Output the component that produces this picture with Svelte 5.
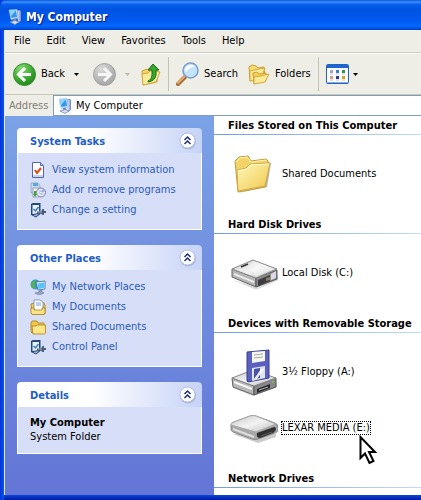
<script>
  const menus = ['File', 'Edit', 'View', 'Favorites', 'Tools', 'Help'];

  const panels = [
    {
      title: 'System Tasks',
      links: [
        { icon: 'info', label: 'View system information' },
        { icon: 'programs', label: 'Add or remove programs' },
        { icon: 'setting', label: 'Change a setting' }
      ]
    },
    {
      title: 'Other Places',
      links: [
        { icon: 'network', label: 'My Network Places' },
        { icon: 'documents', label: 'My Documents' },
        { icon: 'shared', label: 'Shared Documents' },
        { icon: 'setting', label: 'Control Panel' }
      ]
    },
    { title: 'Details', details: { name: 'My Computer', type: 'System Folder' } }
  ];

  const groups = [
    { title: 'Files Stored on This Computer', items: [{ icon: 'folder', label: 'Shared Documents' }] },
    { title: 'Hard Disk Drives', items: [{ icon: 'disk', label: 'Local Disk (C:)' }] },
    {
      title: 'Devices with Removable Storage',
      items: [
        { icon: 'floppy', label: '3½ Floppy (A:)' },
        { icon: 'removable', label: 'LEXAR MEDIA (E:)' }
      ]
    },
    { title: 'Network Drives', items: [] }
  ];

  let address = $state('My Computer');
  let selected = $state('LEXAR MEDIA (E:)');
  let closed = $state({});
</script>

{#snippet computer()}
  <svg class="computer" width="14" height="16" viewBox="0 0 14 16" aria-hidden="true">
    <path d="M9 1h3l1 1v10l-3 2z" fill="#7f93c9" />
    <path d="M10 2h1.500v10H10z" fill="#c3d0f0" />
    <path d="M1 1l8-.5 1 8.500-7 1.500z" fill="#d3ebfd" stroke="#8fb9e6" stroke-width=".6" />
    <path d="M2 2l6-.5 1 6.500-5.500 1z" fill="#2f97ee" />
    <path d="M2 2l6-.5-5 5.500z" fill="#8ad4fd" />
    <path d="M5 10l3-.5.500 2.500H5z" fill="#6c84c4" />
    <path d="M2 13l5-1.500 4 1.500-4 2.500z" fill="#dbe3f5" stroke="#7187bb" stroke-width=".8" />
  </svg>
{/snippet}

{#snippet taskIcon(name)}
  <svg width="16" height="16" viewBox="0 0 16 16" aria-hidden="true">
    {#if name === 'info'}
      <path d="M2.500.5h8l3 3v12h-11z" fill="#fdfdff" stroke="#5367ad" />
      <path d="M10.500.5v3h3" fill="#b8c6ec" stroke="#5367ad" />
      <path d="M3 13h10v2H3z" fill="#cbd3ec" />
      <path d="M5 8l2 3 4-5" fill="none" stroke="#d9521c" stroke-width="2.200" />
    {:else if name === 'programs'}
      <path d="M1 1h7l2 3v7H1z" fill="#c9d9ea" stroke="#91a3ba" stroke-width=".8" />
      <path d="M3 1h5v3H3z" fill="#5aa7da" />
      <path d="M3 6h6v9H3z" fill="#f5f6f8" stroke="#8591a5" stroke-width=".8" />
      <circle cx="11" cy="10.500" r="4.500" fill="#dde2f4" stroke="#7e87b7" />
      <path d="M11 10.500l2-4a4 4 0 0 1 2 3z" fill="#9babe5" />
      <circle cx="11" cy="10.500" r="1.300" fill="#fff" stroke="#868dad" stroke-width=".6" />
      <path d="M4 9h2v3h1l-2 3-2-3h1z" fill="#39a43a" />
    {:else if name === 'setting'}
      <path d="M1 2l2-1h7.500v11L6 15.500 1 13z" fill="#24487c" />
      <path d="M2.500 3h6.500v8l-6.500 1z" fill="#e6f3ff" />
      <path d="M3.500 7l2 2 3-4" fill="none" stroke="#3a77c2" stroke-width="1.400" />
      <path d="M3 13l3 1.500 3-2.500z" fill="#a5b4cf" />
      <path d="M7 9.500h4l1.500-2.500h1.500v2h2v2h-2v2h-1.500L11 11.500H7z" fill="#4c5d79" />
      <path d="M8 10h4" stroke="#b9c6d9" stroke-width=".8" />
    {:else if name === 'network'}
      <circle cx="5.500" cy="5.500" r="5" fill="#3e91e6" />
      <path d="M1 4l4-3 2 1-3 4 2 2-1 2-4-2z" fill="#52b44d" />
      <path d="M6 3l9-1v8l-7 1z" fill="#eaf7ff" stroke="#3262a4" stroke-width=".8" />
      <path d="M7.500 4.500L14 3.500V9l-5.500 1z" fill="#55c4f8" />
      <path d="M9 12l3-1v2l2 1-5 2-4-2 4-1z" fill="#9aa6c5" stroke="#6175a2" stroke-width=".6" />
    {:else if name === 'documents'}
      <path d="M1 5l3-1h10l1 2v9H2z" fill="#f3cc52" stroke="#a97d18" stroke-width=".8" />
      <path d="M4 1h6l3 2v9H4z" fill="#fff" stroke="#6a88b8" stroke-width=".8" />
      <path d="M6 4h5M6 6h5" stroke="#76a0d3" />
      <path d="M1 9h3v2h8V9h3v5l-1 1.500H2L1 14z" fill="#fbe386" stroke="#a97d18" stroke-width=".8" />
    {:else}
      <path d="M1 4l1-2h5l1 2h6v10H2l-1-1z" fill="#f1c84a" stroke="#a97d18" stroke-width=".8" />
      <path d="M2 7h4l1-1h8.500v8l-1 1H3z" fill="#fde68b" stroke="#a97d18" stroke-width=".8" />
    {/if}
  </svg>
{/snippet}

{#snippet driveIcon(name)}
  <svg width="48" height="48" viewBox="0 0 48 48" aria-hidden="true">
    <defs>
      <linearGradient id="gold" x1="0" y1="0" x2="1" y2="1">
        <stop offset="0" stop-color="#fff8b8" />
        <stop offset="1" stop-color="#efc84e" />
      </linearGradient>
      <linearGradient id="metal" x1="0" y1="0" x2="1" y2="1">
        <stop offset="0" stop-color="#c8c8c8" />
        <stop offset=".5" stop-color="#f3f3f3" />
        <stop offset="1" stop-color="#bcbcbc" />
      </linearGradient>
    </defs>
    {#if name === 'folder'}
      <path d="M8 43l29-6 4-24-3-1-3 23z" fill="#8a8a86" opacity=".65" />
      <path d="M5 11l4-4 9-1 3 5 15-2 2 2v6L35 37 8 42z" fill="#f2d469" stroke="#c39a35" />
      <path d="M6 12l4-4 7-1 4 5 15-2" fill="none" stroke="#fff5b3" />
      <path d="M7 20l9-2 4-4 20-1-5 23-27 5z" fill="url(#gold)" stroke="#d2ac45" />
      <path d="M8 21l9-2 4-4 18-1" fill="none" stroke="#fffbd8" />
    {:else if name === 'disk'}
      <path d="M3 31l23 10 23-10v-4L26 37z" fill="#aaa" opacity=".4" />
      <path d="M2 20l24 9v9L2 28z" fill="#b5b5b5" stroke="#666" />
      <path d="M4 24l20 8v2L4 26z" fill="#f0f0f0" />
      <path d="M26 29l21-8v9l-21 8z" fill="#8c8c8c" stroke="#555" />
      <path d="M28 31l12-5v6l-12 5z" fill="#3c3c42" />
      <path d="M36 29l4-1v3l-4 1z" fill="#8b7c5b" />
      <path d="M41 25l5-3v7l-5 2z" fill="#dadaeb" />
      <path d="M2 20l21-9 24 9-21 9z" fill="url(#metal)" stroke="#888" />
      <path d="M24 12l20 8-18 7-7-9z" fill="#fff" opacity=".4" />
      <path d="M11 18l7-3" stroke="#333" stroke-width="1.500" />
    {:else if name === 'floppy'}
      <path d="M3 40l20 8 24-9v-4z" fill="#999" opacity=".4" />
      <path d="M2 30l22 8v9L3 39z" fill="#b7b7b7" stroke="#666" />
      <path d="M24 38l22-8v9l-22 8z" fill="#88888c" stroke="#555" />
      <path d="M2 30l21-8 23 8-22 8z" fill="url(#metal)" stroke="#888" />
      <path d="M4 34l18 7" stroke="#f7f7f7" stroke-width="2" />
      <path d="M27 41l13-5v4l-13 5z" fill="#28282c" />
      <path d="M29 42l9-3" stroke="#bbb" />
      <path d="M43 33v2" stroke="#72bb57" stroke-width="2" />
      <path d="M17 4l22-2v28l-21 4-1-1z" fill="#5a60c0" stroke="#3b3f88" />
      <path d="M22 4l13-1v10l-13 2z" fill="#f7f7f2" />
      <path d="M24 7l9-1M24 10l9-1" stroke="#aaa" />
      <path d="M22 20l13-2v12l-13 3z" fill="#dfe3f0" />
      <path d="M24 21l6-1v10l-6 1z" fill="#4a50a6" />
      <path d="M24 31l7-10h3l-7 10z" fill="#fff" opacity=".9" />
    {:else}
      <path d="M3 30l25 9 18-6v-3z" fill="#999" opacity=".5" />
      <path d="M1 21q0-2 3-3l16-6q3-1 6 0l19 7q3 1 3 4v3q0 2-3 3l-17 6q-3 1-6 0L3 28q-2-1-2-3z" fill="#a7a7a7" stroke="#888" />
      <path d="M3 25l21 8" stroke="#ddd" stroke-width="2" />
      <path d="M1 21q0-2 3-3l16-6q3-1 6 0l20 8-20 8z" fill="url(#metal)" stroke="#aaa" />
      <path d="M27 29l17-6q2 0 2 2t-3 4l-13 5q-4 0-3-5z" fill="#303030" />
      <path d="M31 32l11-4" stroke="#5f5f5f" />
    {/if}
  </svg>
{/snippet}

{#snippet caret()}
  <svg class="caret" width="5" height="3" viewBox="0 0 5 3" aria-hidden="true">
    <path d="M0 0h5L2.500 3z" fill="currentColor" />
  </svg>
{/snippet}

<div class="window">
  <header class="titlebar">
    {@render computer()}
    <h1>My Computer</h1>
  </header>

  <div class="frame">
    <nav class="menubar">
      {#each menus as menu}
        <button>{menu}</button>
      {/each}
    </nav>

    <div class="toolbar">
      <button class="back">
        <svg width="23" height="23" viewBox="0 0 23 23" aria-hidden="true">
          <defs>
            <radialGradient id="green" cx=".35" cy=".25" r=".8">
              <stop offset="0" stop-color="#8cdb76" />
              <stop offset=".6" stop-color="#3da92f" />
              <stop offset="1" stop-color="#1f851d" />
            </radialGradient>
          </defs>
          <circle cx="11.500" cy="11.500" r="11" fill="url(#green)" stroke="#398e36" />
          <path d="M12 5l-6.500 6.500L12 18M6 11.500h12" fill="none" stroke="#fff" stroke-width="3" />
        </svg>
        <span>Back</span>
        {@render caret()}
      </button>
      <button class="forward" disabled aria-label="Forward">
        <svg width="23" height="23" viewBox="0 0 23 23" aria-hidden="true">
          <defs>
            <radialGradient id="gray" cx=".35" cy=".25" r=".8">
              <stop offset="0" stop-color="#dadada" />
              <stop offset="1" stop-color="#a2a2a2" />
            </radialGradient>
          </defs>
          <circle cx="11.500" cy="11.500" r="11" fill="url(#gray)" stroke="#a5a5a5" />
          <path d="M11 5l6.500 6.500L11 18M17 11.500H5" fill="none" stroke="#f7f7f7" stroke-width="3" />
        </svg>
        {@render caret()}
      </button>
      <button class="up" aria-label="Up">
        <svg width="20" height="23" viewBox="0 0 20 23" aria-hidden="true">
          <path d="M1 8l5-2 3 2 8-1-1 12-14 3z" fill="#f5d265" stroke="#cda13b" />
          <path d="M1 11l6-1 2-2 10 1-4 10-13 3z" fill="#fdeb9b" stroke="#d1a743" />
          <path d="M7 18q4-1 4-6V7H7l5-6 6 6h-3v5q-1 6-8 7z" fill="#35a72e" stroke="#18751a" />
        </svg>
      </button>
      <span class="divider"></span>
      <button class="search">
        <svg width="23" height="24" viewBox="0 0 23 24" aria-hidden="true">
          <path d="M10 14l-8 8" stroke="#a56b36" stroke-width="4" stroke-linecap="round" />
          <path d="M9 14l-7 7" stroke="#e6aa70" stroke-width="2" stroke-linecap="round" />
          <circle cx="14.500" cy="8.500" r="7.500" fill="#c3e4fc" stroke="#7b9dcb" stroke-width="1.500" />
          <path d="M9 8q1-5 6-5 3 0 4 2-6 0-9 5z" fill="#fff" opacity=".9" />
        </svg>
        <span>Search</span>
      </button>
      <button class="folders">
        <svg width="22" height="21" viewBox="0 0 22 21" aria-hidden="true">
          <path d="M1 3l3-2 4 1 2 2 6-1 1 10L2 17z" fill="#f9db70" stroke="#cc9d32" />
          <path d="M2 7l9-2 6-1-4 10-11 3z" fill="#fdeb99" stroke="#d3aa41" />
          <path d="M5 9l4-1 2 2 7-1v7L6 20z" fill="#f5cf58" stroke="#cc9d32" />
          <path d="M6 13l7-1 8-2-4 8-11 2z" fill="#feeb9a" stroke="#d3aa41" />
        </svg>
        <span>Folders</span>
      </button>
      <span class="divider"></span>
      <button class="views" aria-label="Views">
        <svg width="23" height="20" viewBox="0 0 23 20" aria-hidden="true">
          <rect x=".5" y=".5" width="22" height="19" rx="1" fill="#fcfcff" stroke="#2461bc" />
          <path d="M1 1h21v3H1z" fill="#1f66d3" />
          <path d="M1 18h21v1H1z" fill="#86aae2" />
          <path d="M4 6h3v3H4z" fill="#a9a2c9" />
          <path d="M10 6h3v3h-3z" fill="#367bd6" />
          <path d="M16 6h3v3h-3z" fill="#329544" />
          <path d="M4 12h3v3H4z" fill="#e29a79" />
          <path d="M10 12h3v3h-3z" fill="#2c3b9b" />
          <path d="M16 12h3v3h-3z" fill="#d1a624" />
          <path d="M4 10h3M10 10h3M16 10h3M4 16h3M10 16h3M16 16h3" stroke="#b7bdcb" stroke-width=".8" />
        </svg>
        {@render caret()}
      </button>
    </div>

    <div class="addressbar">
      <label for="address">Address</label>
      <div class="combo">
        {@render computer()}
        <input id="address" type="text" bind:value={address} />
      </div>
    </div>

    <div class="content">
      <aside class="sidebar">
        {#each panels as panel}
          <section class="panel">
            <div class="panel-head">
              <h2>{panel.title}</h2>
              <button
                class="collapse"
                aria-label="Toggle {panel.title}"
                onclick={() => (closed[panel.title] = !closed[panel.title])}
              >
                <svg width="19" height="19" viewBox="0 0 19 19" aria-hidden="true">
                  <circle cx="10" cy="10.500" r="8" fill="#8e9cc9" opacity=".5" />
                  <circle cx="9.500" cy="9.500" r="7.500" fill="#fff" stroke="#b4bedd" />
                  <path d="M6.500 9l3-3 3 3M6.500 13l3-3 3 3" fill="none" stroke="#1d3168" stroke-width="1.500" />
                </svg>
              </button>
            </div>
            {#if !closed[panel.title]}
              {#if panel.details}
                <div class="panel-details">
                  <strong>{panel.details.name}</strong>
                  <span>{panel.details.type}</span>
                </div>
              {:else}
                <ul class="panel-links">
                  {#each panel.links as link}
                    <li>
                      <a href="#{link.icon}">
                        {@render taskIcon(link.icon)}
                        <span>{link.label}</span>
                      </a>
                    </li>
                  {/each}
                </ul>
              {/if}
            {/if}
          </section>
        {/each}
      </aside>

      <main class="files">
        {#each groups as group}
          <section>
            <h2>{group.title}</h2>
            {#if group.items.length}
              <div class="items">
                {#each group.items as item}
                  <button class="item" class:selected={selected === item.label} onclick={() => (selected = item.label)}>
                    {@render driveIcon(item.icon)}
                    <span class="name">
                      {item.label}
                      {#if selected === item.label}
                        <svg class="pointer" width="19" height="30" viewBox="0 0 19 30" aria-hidden="true">
                          <path
                            d="M1.500 2v21l4.500-4.500L10.500 28l4-2-4.500-9H16z"
                            fill="#fff"
                            stroke="#000"
                            stroke-width="2"
                          />
                        </svg>
                      {/if}
                    </span>
                  </button>
                {/each}
              </div>
            {/if}
          </section>
        {/each}
      </main>
    </div>
  </div>
</div>

<style>
  :global(body) {
    margin: 0;
    background: #ece9d8;
  }

  .window {
    display: flex;
    flex-direction: column;
    box-sizing: border-box;
    min-height: 100vh;
    padding: 0 0 5px 4px;
    overflow: hidden;
    background: linear-gradient(90deg, #0831d9, #0855e8 4px, transparent 4px), linear-gradient(0deg, #0019a0, #0a48dc 5px);
    font: 11px/14px Tahoma, "DejaVu Sans Condensed", "DejaVu Sans", sans-serif;
    color: #000;
  }

  h1,
  h2,
  ul {
    margin: 0;
    padding: 0;
  }

  button {
    display: flex;
    align-items: center;
    padding: 0;
    border: 0;
    background: none;
    font: inherit;
    color: inherit;
  }

  svg {
    flex: none;
    display: block;
  }

  .titlebar {
    display: flex;
    align-items: center;
    gap: 4px;
    box-sizing: border-box;
    height: 30px;
    margin-left: -4px;
    padding: 4px 0 0 8px;
    border-top-left-radius: 7px;
    background: linear-gradient(180deg, #0a4fd8 0, #3a94ff 2px, #0a62ee 4px, #0053e1 9px, #0058ee 20px, #0468ff 26px, #0040c8 30px);
    color: #fff;
  }

  .titlebar h1 {
    font: bold 12px/18px "Trebuchet MS", "DejaVu Sans Condensed", "DejaVu Sans", sans-serif;
    text-shadow: 1px 1px 1px #0a1883;
  }

  .frame {
    flex: 1;
    display: flex;
    flex-direction: column;
    border-left: 1px solid #dfe6f8;
    background: #efeee6;
  }

  .menubar {
    display: flex;
    align-items: center;
    gap: 16px;
    height: 22px;
    padding-left: 9px;
    border-bottom: 1px solid #d0cec2;
  }

  .toolbar {
    display: flex;
    align-items: center;
    height: 40px;
    padding-left: 8px;
    border-top: 1px solid #fff;
  }

  .toolbar .caret {
    margin-left: 4px;
  }

  .back,
  .search,
  .folders {
    gap: 5px;
  }

  .forward {
    gap: 5px;
    margin-left: 14px;
    color: #b9b8b0;
  }

  .up {
    margin-left: 11px;
  }

  .divider {
    width: 1px;
    height: 34px;
    margin: 0 7px;
    background: #c5c2b2;
  }

  .folders {
    margin-left: 10px;
  }

  .addressbar {
    display: flex;
    align-items: stretch;
    height: 22px;
    border-top: 1px solid #c9c6ba;
    box-sizing: border-box;
  }

  .addressbar label {
    width: 48px;
    box-sizing: border-box;
    padding: 4px 0 0 4px;
    color: #7f7d76;
  }

  .combo {
    flex: 1;
    display: flex;
    align-items: center;
    gap: 4px;
    padding-left: 4px;
    border: 1px solid #7f9db9;
    border-right: 0;
    background: #fff;
  }

  .combo input {
    flex: 1;
    min-width: 0;
    padding: 0;
    border: 0;
    outline: 0;
    background: none;
    font: inherit;
    color: inherit;
  }

  .content {
    flex: 1;
    display: flex;
  }

  .sidebar {
    flex: none;
    display: flex;
    flex-direction: column;
    gap: 15px;
    box-sizing: border-box;
    width: 209px;
    padding: 12px;
    background: linear-gradient(180deg, #7ba2e7, #6375d6);
  }

  .panel-head {
    display: flex;
    align-items: center;
    justify-content: space-between;
    height: 25px;
    padding: 0 5px 0 13px;
    border-radius: 4px 4px 0 0;
    background: linear-gradient(90deg, #fff 40%, #c6d3f7);
  }

  .panel-head h2 {
    font: bold 11px/14px Tahoma, "DejaVu Sans Condensed", "DejaVu Sans", sans-serif;
    padding-top: 3px;
    color: #215dc6;
  }

  .panel-links,
  .panel-details {
    border: 1px solid #fff;
    border-top: 0;
    background: #d6dff7;
  }

  .panel-links {
    padding: 7px 12px 9px;
    list-style: none;
  }

  .panel-links a {
    display: flex;
    align-items: center;
    gap: 6px;
    height: 20px;
    color: #2c5bb8;
    text-decoration: none;
    white-space: nowrap;
  }

  .panel-details {
    display: flex;
    flex-direction: column;
    padding: 9px 12px;
  }

  .files {
    flex: 1;
    min-width: 0;
    background: #fff;
  }

  .files h2 {
    height: 18px;
    padding-left: 14px;
    border-bottom: 1px solid;
    border-image: linear-gradient(90deg, #6f9ce8, #c4daf7) 1;
    font: bold 11px/20px Tahoma, "DejaVu Sans Condensed", "DejaVu Sans", sans-serif;
    white-space: nowrap;
  }

  .items {
    padding: 11px 0 13px 16px;
  }

  .item {
    gap: 3px;
    height: 56px;
    white-space: nowrap;
  }

  .name {
    position: relative;
    padding: 0 1px;
  }

  .selected .name {
    outline: 1px dotted #000;
    outline-offset: -1px;
  }

  .pointer {
    position: absolute;
    right: -7px;
    top: 14px;
  }
</style>
